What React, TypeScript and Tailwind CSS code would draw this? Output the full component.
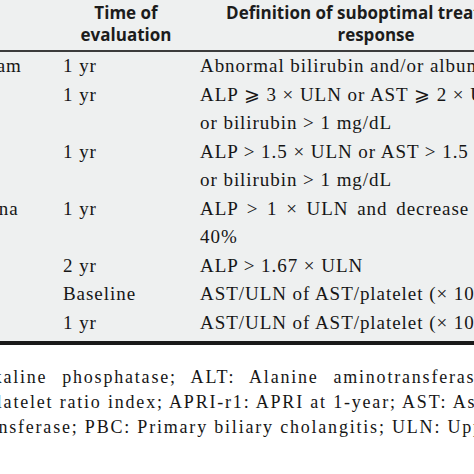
const rows = [
  { name: "Rotterdam", time: "1 yr", def: ["Abnormal bilirubin and/or albumin"] },
  { name: "Paris-I", time: "1 yr", def: ["ALP ⩾ 3 × ULN or AST ⩾ 2 × ULN", "or bilirubin > 1 mg/dL"] },
  { name: "Paris-II", time: "1 yr", def: ["ALP > 1.5 × ULN or AST > 1.5 × ULN", "or bilirubin > 1 mg/dL"] },
  { name: "Barcelona", time: "1 yr", def: ["ALP > 1 × ULN and decrease <", "40%"], spread: true },
  { name: "", time: "2 yr", def: ["ALP > 1.67 × ULN"] },
  { name: "APRI", time: "Baseline", def: ["AST/ULN of AST/platelet (× 10⁹/L) × 100 > 0.54"] },
  { name: "", time: "1 yr", def: ["AST/ULN of AST/platelet (× 10⁹/L) × 100 > 0.54"] },
];

const App = () => {
  return (
    <div className="w-[474px] h-[474px] overflow-hidden bg-white text-[#161616]">
      <div className="bg-[#eef0f0]">
        <div className="-ml-[67px] w-[623px]">
          {/* header */}
          <div className="grid grid-cols-[123px_140px_360px] h-[50px] pt-[2px] font-['Open_Sans',sans-serif] font-bold text-[17px] leading-[22px] text-[#1c1c1c]">
            <div />
            <div className="text-center">
              Time of
              <br />
              evaluation
            </div>
            <div className="text-center">
              Definition of suboptimal treatment
              <br />
              response
            </div>
          </div>
          <div className="h-[2px] bg-[#3c3c3c]" />

          {/* body */}
          <div className="font-['Liberation_Serif',serif] text-[19px] tracking-[0.05em] leading-[28.5px] pb-[4px]">
            {rows.map((row, i) => (
              <div key={i} className="grid grid-cols-[123px_140px_360px]">
                <div className="whitespace-nowrap">{row.name}</div>
                <div className="pl-[7px] whitespace-nowrap">{row.time}</div>
                <div className="pl-[4px]">
                  {row.def.map((line, j) => (
                    <div
                      key={j}
                      className={`whitespace-nowrap ${row.spread && j === 0 ? "[word-spacing:3px]" : ""}`}
                    >
                      {line}
                    </div>
                  ))}
                </div>
              </div>
            ))}
          </div>
        </div>
      </div>
      <div className="h-[4px] bg-[#1a1a1a]" />

      {/* footnote */}
      <div className="pt-[20px] font-['Liberation_Serif',serif] text-[18px] leading-[25px] tracking-[0.1em]">
        <div className="whitespace-nowrap -ml-[89px] [word-spacing:8.5px]">
          ALP: Alkaline phosphatase; ALT: Alanine aminotransferase; APRI: AST to
        </div>
        <div className="whitespace-nowrap -ml-[14px] [word-spacing:0px]">
          platelet ratio index; APRI-r1: APRI at 1-year; AST: Aspartate
        </div>
        <div className="whitespace-nowrap -ml-[80px] [word-spacing:0px]">
          aminotransferase; PBC: Primary biliary cholangitis; ULN: Upper limit of normal.
        </div>
      </div>
    </div>
  );
};

export default App;
